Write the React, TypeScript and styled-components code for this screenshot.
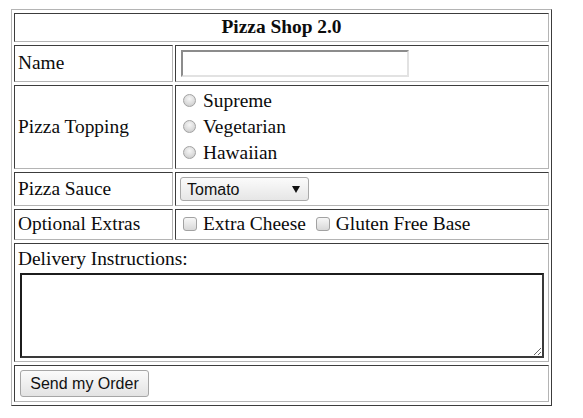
import styled, { createGlobalStyle } from "styled-components";

//styles
const GlobalStyle = createGlobalStyle`
  html, body {
    background: #ffffff;
  }
  body {
    margin: 9px 0 0 11px;
  }
`;

const OrderTable = styled.table`
  width: 541px;
  border-collapse: separate;
  border-spacing: 2px 3px;
  border: 1px solid;
  border-color: #b4b4b4 #3c3c3c #3c3c3c #b4b4b4;
  font-family: "Liberation Serif", "Times New Roman", serif;
  font-size: 19.4px;
  color: #0c0c0c;
`;

const Cell = styled.td<{ $h: number; $w?: number; $head?: boolean }>`
  box-sizing: border-box;
  height: ${(p) => p.$h}px;
  ${(p) => (p.$w ? `width: ${p.$w}px;` : "")}
  padding: 0 3px;
  border: 1px solid;
  border-color: #3c3c3c #b4b4b4 #b4b4b4 #3c3c3c;
  vertical-align: middle;
  text-align: ${(p) => (p.$head ? "center" : "left")};
  font-weight: ${(p) => (p.$head ? 700 : 400)};
  line-height: 1.15;
`;

const TextInput = styled.input`
  box-sizing: border-box;
  display: block;
  width: 228px;
  height: 27px;
  margin: 0 0 0 2px;
  border: 2px solid;
  border-color: #8c8c8c #e2e2e2 #e2e2e2 #8c8c8c;
  background: #ffffff;
  outline: none;
`;

const OptionList = styled.div`
  display: flex;
  flex-direction: column;
`;

const OptionLabel = styled.label`
  display: flex;
  align-items: center;
  height: 26px;
`;

const Radio = styled.input`
  appearance: none;
  box-sizing: border-box;
  width: 13px;
  height: 13px;
  margin: 0 7px 2px 4px;
  border-radius: 50%;
  border: 1px solid #a2a2a2;
  background: radial-gradient(circle at 50% 35%, #f6f6f6 0%, #dcdcdc 55%, #c4c4c4 100%);
`;

const SelectWrap = styled.span`
  position: relative;
  display: inline-block;
  margin-left: 1px;
  vertical-align: middle;
`;

const Select = styled.select`
  appearance: none;
  box-sizing: border-box;
  display: block;
  width: 129px;
  height: 24px;
  padding: 0 0 0 6px;
  border: 1px solid #a9a9a9;
  border-radius: 3px;
  background: linear-gradient(#fbfbfb, #e6e6e6);
  font-family: "Liberation Sans", Arial, sans-serif;
  font-size: 16px;
  color: #111111;
`;

const SelectArrow = styled.span`
  position: absolute;
  right: 9px;
  top: 9px;
  width: 0;
  height: 0;
  border-left: 4px solid transparent;
  border-right: 4px solid transparent;
  border-top: 7px solid #111111;
  pointer-events: none;
`;

const InlineOptions = styled.div`
  display: flex;
  align-items: center;
`;

const CheckLabel = styled.label`
  display: flex;
  align-items: center;
  margin-right: 6px;
`;

const Check = styled.input`
  appearance: none;
  box-sizing: border-box;
  width: 14px;
  height: 14px;
  margin: 0 6px 1px 4px;
  border: 1px solid #a2a2a2;
  border-radius: 3px;
  background: linear-gradient(#f7f7f7, #d8d8d8);
`;

const NoteLabel = styled.div`
  line-height: 24px;
`;

const NoteArea = styled.textarea`
  box-sizing: border-box;
  display: block;
  width: 524px;
  height: 85px;
  margin: 2px 0 0 2px;
  border: 2px solid;
  border-color: #1c1c1c #3a3a3a #3a3a3a #1c1c1c;
  background: #ffffff;
  outline: none;
  resize: both;
`;

const SendButton = styled.button`
  box-sizing: border-box;
  display: block;
  width: 129px;
  height: 27px;
  margin-left: 2px;
  padding: 0;
  border: 1px solid #a6a6a6;
  border-radius: 3px;
  background: linear-gradient(#fbfbfb, #e3e3e3);
  font-family: "Liberation Sans", Arial, sans-serif;
  font-size: 16px;
  color: #111111;
`;

const toppings = ["Supreme", "Vegetarian", "Hawaiian"];
const extras = ["Extra Cheese", "Gluten Free Base"];

export default function App() {
  return (
    <>
      <GlobalStyle />
      <form onSubmit={(e) => e.preventDefault()}>
        <OrderTable>
          <tbody>
            <tr>
              <Cell as="th" colSpan={2} $h={29} $head>
                Pizza Shop 2.0
              </Cell>
            </tr>
            <tr>
              <Cell $h={37} $w={159}>Name</Cell>
              <Cell $h={37}>
                <TextInput type="text" name="name" />
              </Cell>
            </tr>
            <tr>
              <Cell $h={84}>Pizza Topping</Cell>
              <Cell $h={84}>
                <OptionList>
                  {toppings.map((t) => (
                    <OptionLabel key={t}>
                      <Radio type="radio" name="topping" value={t} />
                      {t}
                    </OptionLabel>
                  ))}
                </OptionList>
              </Cell>
            </tr>
            <tr>
              <Cell $h={34}>Pizza Sauce</Cell>
              <Cell $h={34}>
                <SelectWrap>
                  <Select name="sauce" defaultValue="Tomato">
                    <option>Tomato</option>
                    <option>BBQ</option>
                    <option>Garlic</option>
                  </Select>
                  <SelectArrow />
                </SelectWrap>
              </Cell>
            </tr>
            <tr>
              <Cell $h={31}>Optional Extras</Cell>
              <Cell $h={31}>
                <InlineOptions>
                  {extras.map((x) => (
                    <CheckLabel key={x}>
                      <Check type="checkbox" name="extras" value={x} />
                      {x}
                    </CheckLabel>
                  ))}
                </InlineOptions>
              </Cell>
            </tr>
            <tr>
              <Cell colSpan={2} $h={119}>
                <NoteLabel>Delivery Instructions:</NoteLabel>
                <NoteArea name="instructions" />
              </Cell>
            </tr>
            <tr>
              <Cell colSpan={2} $h={37}>
                <SendButton type="submit">Send my Order</SendButton>
              </Cell>
            </tr>
          </tbody>
        </OrderTable>
      </form>
    </>
  );
}
